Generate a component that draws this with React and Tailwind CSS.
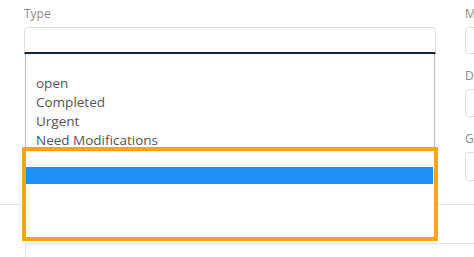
import React from "react";

const font = { fontFamily: '"Open Sans", "Noto Sans", sans-serif' };

function Field({ label, className }) {
  return (
    <div className="flex flex-col">
      <span className="text-[12px] leading-[16px] text-[#8c8c8c]">{label}</span>
      <div className={`mt-[5px] w-[60px] rounded-[4px] border border-[#dedede] bg-white ${className}`} />
    </div>
  );
}

export default function App() {
  const options = ["", "open", "Completed", "Urgent", "Need Modifications", "", ""];

  return (
    <div
      className="relative h-[257px] w-[474px] overflow-hidden bg-white"
      style={font}
    >
      {/* form row */}
      <div className="flex h-[204px] gap-[29px] pl-[24px] pt-[6px]">
        <div className="flex w-[412px] shrink-0 flex-col">
          <span className="text-[12px] leading-[16px] text-[#8c8c8c]">Type</span>
          <div className="mt-[5px] h-[27px] rounded-t-[4px] border border-b-2 border-[#dedede] border-b-[#1c2533] bg-white" />
          <div className="ml-[1px] mr-[1px] flex-1 border-x border-[#b9c1cd] bg-white px-[10px] pt-[1px]">
            {options.map((o, i) => (
              <div key={i} className="h-[19px] text-[13.5px] leading-[19px] text-[#555555]">
                {o}
              </div>
            ))}
          </div>
        </div>

        <div className="flex shrink-0 flex-col">
          <Field label="Module" className="h-[27px]" />
          <div className="mt-[14px]">
            <Field label="Due Date" className="h-[28px]" />
          </div>
          <div className="mt-[14px]">
            <Field label="Group" className="h-[29px]" />
          </div>
        </div>
      </div>

      {/* divider */}
      <div className="border-t border-[#e3e3e3]" />

      {/* next field box */}
      <div className="ml-[25px] mt-[38px] h-[20px] border-l border-t border-[#e3e3e3]" />

      {/* highlight annotation */}
      <div className="absolute left-[22px] top-[147px] h-[94px] w-[416px] border-[4px] border-[#f6a51f] bg-white">
        <div className="mt-[16px] h-[17px] w-[407px] bg-[#1f8ff6]" />
      </div>
    </div>
  );
}
